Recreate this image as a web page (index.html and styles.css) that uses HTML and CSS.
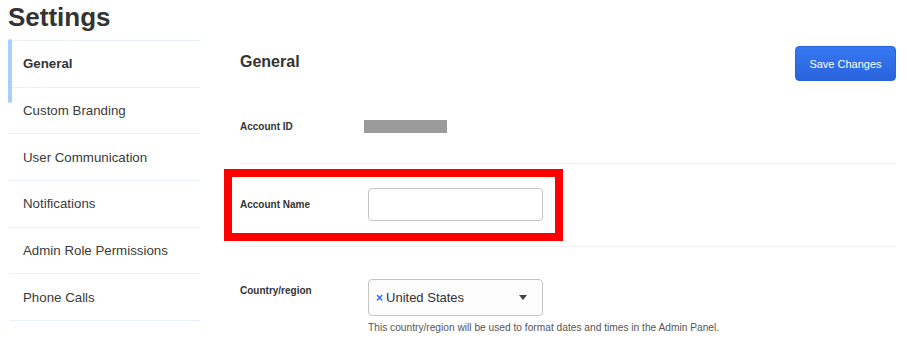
FILE: index.html
```html
<!DOCTYPE html>
<html lang="en">
<head>
    <meta charset="UTF-8">
    <meta name="viewport" content="width=device-width, initial-scale=1.0">
    <title>Settings</title>
    <link rel="stylesheet" href="styles.css">
</head>
<body>

    <h1>Settings</h1>
    <div class="layout">
        <ul class="side-nav">
            <li class="nav-item active">General</li>
            <li class="nav-item">Custom Branding</li>
            <li class="nav-item">User Communication</li>
            <li class="nav-item">Notifications</li>
            <li class="nav-item">Admin Role Permissions</li>
            <li class="nav-item">Phone Calls</li>
        </ul>

        <div class="main">
            <div class="main-header">
                <h2>General</h2>
                <button class="btn-save">Save Changes</button>
            </div>

            <div class="row row-id">
                <div class="row-label">Account ID</div>
                <div class="row-value"><span class="redacted"></span></div>
            </div>

            <div class="row row-name">
                <div class="highlight"></div>
                <div class="row-label">Account Name</div>
                <div class="row-value"><input type="text" class="text-input"></div>
            </div>

            <div class="row row-country">
                <div class="row-label">Country/region</div>
                <div class="row-value">
                    <div class="select">
                        <span class="select-clear">&times;</span>
                        <span class="select-text">United States</span>
                        <span class="select-caret"></span>
                    </div>
                    <p class="help-text">This country/region will be used to format dates and times in the Admin Panel.</p>
                </div>
            </div>
        </div>
    </div>

</body>
</html>
```

FILE: styles.css
```css
body {
    margin: 0;
    padding: 0 13px 0 8px;
    font-family: "Liberation Sans", Arial, sans-serif;
    color: #333;
    background-color: white;
}
h1 {
    margin: 0 0 6px;
    font-size: 26px;
    line-height: 34px;
    font-weight: bold;
    color: #333;
}
.layout {
    display: flex;
    gap: 40px;
}

/* sidebar */
.side-nav {
    list-style: none;
    margin: 0;
    padding: 0;
    width: 192px;
    border-top: 1px solid #e8f2fc;
}
.nav-item {
    position: relative;
    height: 45.67px;
    display: flex;
    align-items: center;
    padding-left: 14px;
    font-size: 13.3px;
    color: #3a3a3a;
    border-bottom: 1px solid #e8f2fc;
    margin-left: 1px;
}
.nav-item.active {
    font-weight: bold;
    color: #333;
}
.nav-item.active::before {
    content: "";
    position: absolute;
    left: -1px;
    top: -2px;
    width: 4px;
    height: 64px;
    border-radius: 2px;
    background-color: #a6d0fa;
}

/* main panel */
.main {
    flex: 1;
    padding-top: 6px;
}
.main-header {
    display: flex;
    justify-content: space-between;
    align-items: center;
    height: 35px;
}
.main-header h2 {
    margin: 0 0 3px;
    font-size: 16px;
    color: #333;
}
.btn-save {
    width: 101px;
    height: 35px;
    padding: 0;
    font-family: inherit;
    font-size: 11px;
    color: white;
    background: linear-gradient(#3678f2, #2a63dc);
    border: 1px solid #2b63d9;
    border-radius: 4px;
    cursor: pointer;
}
.row {
    position: relative;
    display: flex;
    align-items: center;
    border-bottom: 1px solid #f1f1f1;
}
.row-label {
    width: 128px;
    flex-shrink: 0;
    font-size: 10px;
    line-height: 12px;
    font-weight: bold;
    color: #333;
}
.row-id {
    padding: 39px 0 30px;
}
.row-id .row-value {
    margin-left: -4px;
}
.redacted {
    display: block;
    width: 83px;
    height: 13px;
    background-color: #9b9b9b;
}
.row-name {
    padding: 24px 0 25px;
}
.text-input {
    display: block;
    box-sizing: border-box;
    width: 175px;
    height: 33px;
    border: 1px solid #c4c4c4;
    border-radius: 4px;
    margin: 0;
}
.highlight {
    position: absolute;
    left: -16px;
    top: 5px;
    width: 339px;
    height: 72px;
    box-sizing: border-box;
    border: 8px solid #ff0000;
}
.row-country {
    align-items: flex-start;
    padding-top: 32px;
    border-bottom: none;
}
.row-country .row-label {
    padding-top: 6px;
}
.select {
    box-sizing: border-box;
    width: 175px;
    height: 37px;
    display: flex;
    align-items: center;
    padding: 0 15px 0 7px;
    border: 1px solid #c4c4c4;
    border-radius: 4px;
    background-color: #fcfcfc;
}
.select-clear {
    color: #2f6de0;
    font-size: 12px;
    font-weight: bold;
    margin-right: 3px;
}
.select-text {
    flex: 1;
    font-size: 13px;
    color: #333;
}
.select-caret {
    width: 0;
    height: 0;
    border-left: 4px solid transparent;
    border-right: 4px solid transparent;
    border-top: 5px solid #444;
}
.help-text {
    margin: 5px 0 0;
    font-size: 10.2px;
    line-height: 13px;
    color: #555;
    white-space: nowrap;
}
```
